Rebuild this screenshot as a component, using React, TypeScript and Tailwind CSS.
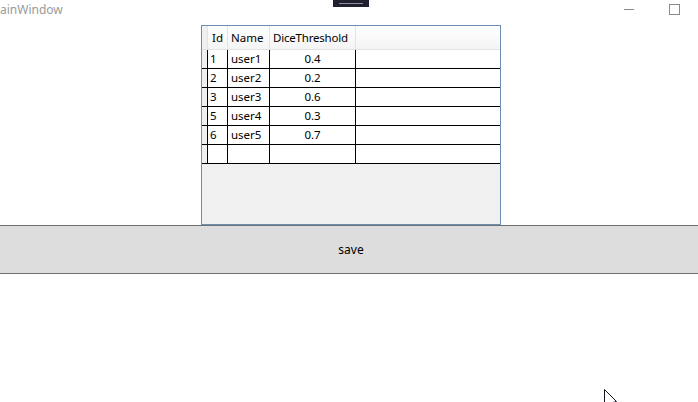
import React from "react";

const rows = [
  { id: "1", name: "user1", dice: "0.4" },
  { id: "2", name: "user2", dice: "0.2" },
  { id: "3", name: "user3", dice: "0.6" },
  { id: "5", name: "user4", dice: "0.3" },
  { id: "6", name: "user5", dice: "0.7" },
  { id: "", name: "", dice: "" },
];

export default function App() {
  return (
    <div className="relative w-[698px] h-[402px] overflow-hidden bg-white text-[12px] text-black font-['Noto_Sans',sans-serif]">
      {/* title bar */}
      <div className="flex h-[25px] items-start justify-between">
        <span className="mt-[2px] leading-[16px] text-[#9a9a9a]">ainWindow</span>
        <div className="flex items-start">
          <div className="mt-[9px] h-px w-[10px] bg-[#8a8a8a]" />
          <div className="ml-[35px] mr-[18px] mt-[4px] h-[11px] w-[11px] border border-[#8a8a8a]" />
        </div>
      </div>

      {/* drag handle */}
      <div className="absolute left-[333px] top-0 flex h-[7px] w-[36px] items-center justify-center bg-[#1f1f2e]">
        <div className="h-px w-[24px] bg-[#8c8c9c]" />
      </div>

      {/* data grid */}
      <div className="ml-[201px] flex h-[200px] w-[300px] flex-col border border-[#6b8fb4] bg-[#f0f0f0] text-[11.5px]">
        <div className="flex h-[24px] border-b border-[#e3e3e3] bg-[linear-gradient(#ffffff,#f4f4f4)]">
          <div className="w-[6px] border-r border-[#e3e3e3] bg-[#f0f0f0]" />
          <div className="flex w-[20px] items-center border-r border-[#e3e3e3] pl-[4px]">Id</div>
          <div className="flex w-[42px] items-center border-r border-[#e3e3e3] pl-[3px]">Name</div>
          <div className="flex w-[86px] items-center border-r border-[#e3e3e3] pl-[3px] whitespace-nowrap tracking-[-0.2px]">DiceThreshold</div>
          <div className="flex-1" />
        </div>
        {rows.map((r, i) => (
          <div key={i} className="flex h-[19px] border-b border-black bg-white leading-[18px]">
            <div className="w-[6px] border-r border-black bg-[#f0f0f0]" />
            <div className="w-[20px] border-r border-black pl-[2px]">{r.id}</div>
            <div className="w-[42px] border-r border-black pl-[3px]">{r.name}</div>
            <div className="w-[86px] border-r border-black text-center">{r.dice}</div>
            <div className="flex-1" />
          </div>
        ))}
      </div>

      {/* save button */}
      <div className="flex h-[49px] items-center justify-center border-y border-[#707070] bg-[#dddddd]">
        <span className="ml-[4px]">save</span>
      </div>

      {/* mouse cursor */}
      <svg className="absolute left-[604px] top-[389px]" width="14" height="16" viewBox="0 0 14 16">
        <path d="M0.5 0.5 L0.5 15.5 L12.5 12.5 Z" fill="#fff" stroke="#1c1024" strokeWidth="1" />
      </svg>
    </div>
  );
}
